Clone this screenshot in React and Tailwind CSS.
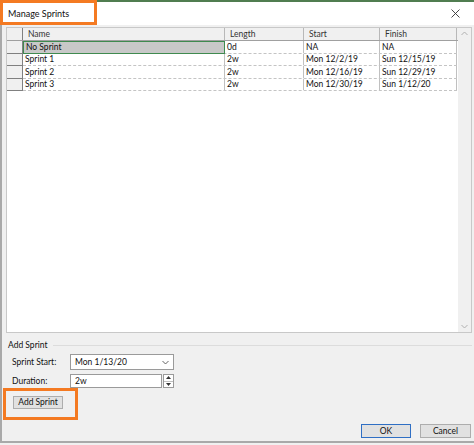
import React from "react";

const cols = [
  { w: "w-[202px]" },
  { w: "w-[79px]" },
  { w: "w-[76px]" },
  { w: "w-[77px]" },
];

const rows = [
  ["No Sprint", "0d", "NA", "NA"],
  ["Sprint 1", "2w", "Mon 12/2/19", "Sun 12/15/19"],
  ["Sprint 2", "2w", "Mon 12/16/19", "Sun 12/29/19"],
  ["Sprint 3", "2w", "Mon 12/30/19", "Sun 1/12/20"],
];

function Grid() {
  return (
    <div className="ml-[4px] mt-[2px] flex h-[306px] w-[466px] border border-[#c8c8c8] bg-white">
      <div className="flex-1">
        <div className="flex h-[13px] border-b border-[#a0a0a0] bg-[#f0f0f0]">
          <div className="w-[16px] border-r border-[#808080]" />
          {["Name", "Length", "Start", "Finish"].map((h, i) => (
            <div
              key={h}
              className={`${cols[i].w} flex items-center border-r border-[#b8b8b8] pl-[5px] leading-none text-[#333]`}
            >
              {h}
            </div>
          ))}
        </div>
        {rows.map((r, ri) => (
          <div key={ri} className="flex h-[12.5px]">
            <div className="w-[16px] border-b border-r border-[#808080] bg-[#f0f0f0]" />
            <div className="flex border-b border-dashed border-[#c4c4c4]">
              {r.map((c, ci) => {
                const sel = ri === 0 && ci === 0;
                return (
                  <div
                    key={ci}
                    className={`${cols[ci].w} flex items-center pl-[2px] leading-none ${
                      sel
                        ? "-mb-px border border-[#3f8a4f] bg-[#c8c8c8]"
                        : "border-r border-solid border-[#c0c0c0]"
                    }`}
                  >
                    {c}
                  </div>
                );
              })}
            </div>
          </div>
        ))}
      </div>
      <div className="flex w-[13px] flex-col items-center justify-between bg-[#f0f0f0] py-[3px]">
        <svg width="7" height="5" viewBox="0 0 7 5">
          <path d="M0.5 4 L3.5 1 L6.5 4" fill="none" stroke="#b0b0b0" strokeWidth="1" />
        </svg>
        <svg width="7" height="5" viewBox="0 0 7 5">
          <path d="M0.5 1 L3.5 4 L6.5 1" fill="none" stroke="#b0b0b0" strokeWidth="1" />
        </svg>
      </div>
    </div>
  );
}

export default function App() {
  return (
    <div
      className="relative h-[445px] w-[474px] overflow-hidden bg-[#f0f0f0] text-[8.5px] text-[#111]"
      style={{ fontFamily: "Lato, 'Noto Sans', sans-serif" }}
    >
      <div className="h-[2px] bg-[#507d50]" />
      <div className="flex h-[23px] items-center justify-between bg-white pl-[8px] pr-[14px]">
        <span className="text-[9px]">Manage Sprints</span>
        <svg width="9" height="9" viewBox="0 0 9 9">
          <path d="M0.5 0.5 L8.5 8.5 M8.5 0.5 L0.5 8.5" stroke="#333" strokeWidth="0.9" />
        </svg>
      </div>
      <div className="flex h-[418px] flex-col border-b-[2px] border-l-[2px] border-[#a9a9a9]">
        <Grid />
        <div className="mt-[6px] flex h-[12px] items-center pl-[6px] pr-[2px]">
          <span>Add Sprint</span>
          <div className="ml-[5px] h-px flex-1 bg-[#dcdcdc]" />
        </div>
        <div className="mt-[3px] flex h-[16px] items-center pl-[10px]">
          <span className="w-[58px]">Sprint Start:</span>
          <div className="flex h-full w-[104px] items-center justify-between border border-[#9a9a9a] bg-white pl-[4px] pr-[4px]">
            <span>Mon 1/13/20</span>
            <svg width="7" height="5" viewBox="0 0 7 5">
              <path d="M0.5 1 L3.5 4 L6.5 1" fill="none" stroke="#555" strokeWidth="0.9" />
            </svg>
          </div>
        </div>
        <div className="mt-[4px] flex h-[14px] items-center pl-[10px]">
          <span className="w-[58px]">Duration:</span>
          <div className="flex h-full w-[92px] items-center border border-[#9a9a9a] bg-white pl-[4px]">
            2w
          </div>
          <div className="ml-[1px] flex h-full w-[11px] flex-col border border-[#9a9a9a] bg-white">
            <div className="flex flex-1 items-center justify-center border-b border-[#c0c0c0]">
              <svg width="5" height="3" viewBox="0 0 5 3">
                <path d="M0 3 L2.5 0 L5 3 Z" fill="#333" />
              </svg>
            </div>
            <div className="flex flex-1 items-center justify-center">
              <svg width="5" height="3" viewBox="0 0 5 3">
                <path d="M0 0 L2.5 3 L5 0 Z" fill="#333" />
              </svg>
            </div>
          </div>
        </div>
        <div className="ml-[11px] mt-[8px] flex h-[13px] w-[50px] items-center justify-center border border-[#adadad] bg-[#e1e1e1]">
          Add Sprint
        </div>
        <div className="mt-[15px] flex h-[14px] justify-end gap-[9px] pr-[3px]">
          <div className="flex w-[50px] items-center justify-center border border-[#2f6fc4] bg-[#e1e1e1]">
            OK
          </div>
          <div className="flex w-[51px] items-center justify-center border border-[#adadad] bg-[#e1e1e1]">
            Cancel
          </div>
        </div>
      </div>
      <div className="pointer-events-none absolute left-0 top-0 h-[25px] w-[97px] border-[3px] border-[#f47a22]" />
      <div className="pointer-events-none absolute left-[3px] top-[388px] h-[32px] w-[75px] border-[3px] border-[#f47a22]" />
    </div>
  );
}
